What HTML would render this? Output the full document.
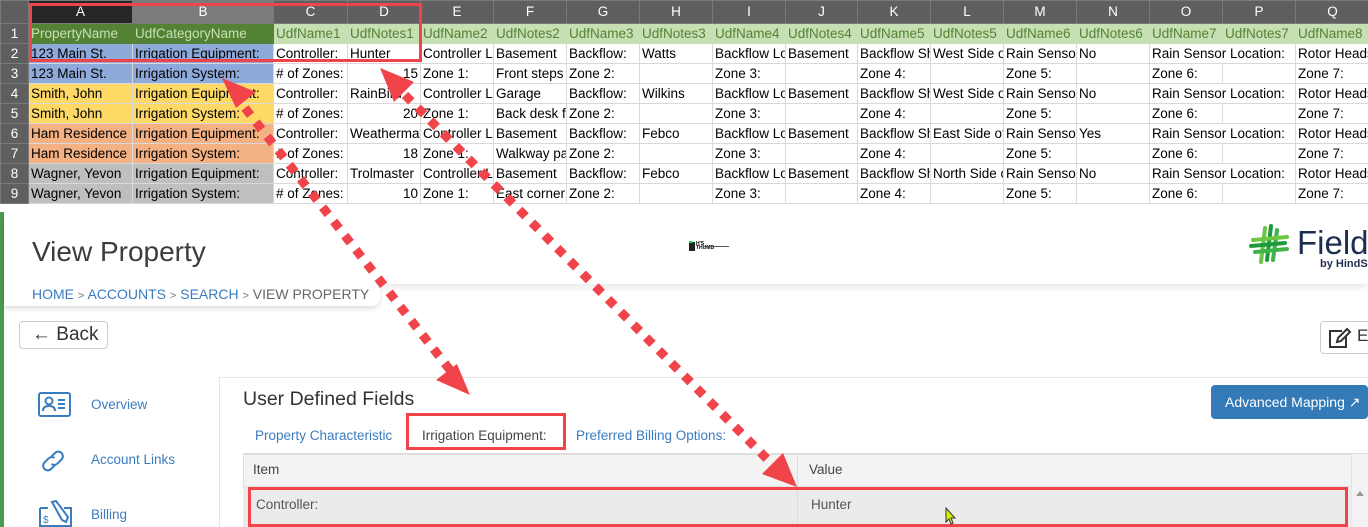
<!DOCTYPE html>
<html><head><meta charset="utf-8"><style>
*{margin:0;padding:0;box-sizing:border-box}
body{width:1368px;height:527px;overflow:hidden;background:#fff;font-family:"Liberation Sans",sans-serif;position:relative}
table.xl{position:absolute;left:0;top:0;border-collapse:collapse;table-layout:fixed;width:1368px;font-size:13.5px;color:#000}
table.xl td{height:20px;border:1px solid #d9d9d9;white-space:nowrap;overflow:hidden;padding:0 2px;line-height:18px}
table.xl tr.ch td{height:23px;background:#5f5f5f;color:#fff;text-align:center;border-color:#7a7a7a;font-size:13.5px}
table.xl td.rn{background:#5f5f5f;color:#fff;text-align:center;border-color:#7a7a7a;padding:0}
tr.h1 td{background:#c6e0b4;color:#548235;border-color:#c6e0b4}
tr.h1 td.g{background:#548235;color:#c6e0b4;border-color:#548235}
.b{background:#8eaadb}.y{background:#ffd966}.o{background:#f4b183}.s{background:#bfbfbf}
.r{text-align:right}
.abs{position:absolute;white-space:nowrap}
.clip{position:absolute;overflow:hidden}
</style></head><body>
<table class="xl">
<colgroup><col style="width:28px"><col style="width:104px"><col style="width:141px"><col style="width:74px"><col style="width:73px"><col style="width:73px"><col style="width:73px"><col style="width:73px"><col style="width:73px"><col style="width:73px"><col style="width:72px"><col style="width:73px"><col style="width:73px"><col style="width:73px"><col style="width:73px"><col style="width:73px"><col style="width:73px"><col style="width:74px"></colgroup>
<tr class="ch"><td style="background:#5f5f5f"></td><td style="background:#262626">A</td><td style="background:#7b7b7b">B</td><td>C</td><td>D</td><td>E</td><td>F</td><td>G</td><td>H</td><td>I</td><td>J</td><td>K</td><td>L</td><td>M</td><td>N</td><td>O</td><td>P</td><td>Q</td></tr>
<tr class="h1"><td class="rn">1</td><td class="g">PropertyName</td><td class="g">UdfCategoryName</td><td>UdfName1</td><td>UdfNotes1</td><td>UdfName2</td><td>UdfNotes2</td><td>UdfName3</td><td>UdfNotes3</td><td>UdfName4</td><td>UdfNotes4</td><td>UdfName5</td><td>UdfNotes5</td><td>UdfName6</td><td>UdfNotes6</td><td>UdfName7</td><td>UdfNotes7</td><td>UdfName8</td></tr>
<tr><td class="rn">2</td><td class="b">123 Main St.</td><td class="b">Irrigation Equipment:</td><td>Controller:</td><td>Hunter</td><td>Controller Location:</td><td>Basement</td><td>Backflow:</td><td>Watts</td><td>Backflow Location:</td><td>Basement</td><td>Backflow Shutoff:</td><td>West Side of house</td><td>Rain Sensor:</td><td>No</td><td colspan="2">Rain Sensor Location:</td><td>Rotor Heads:</td></tr>
<tr><td class="rn">3</td><td class="b">123 Main St.</td><td class="b">Irrigation System:</td><td># of Zones:</td><td class="r">15</td><td>Zone 1:</td><td>Front steps</td><td>Zone 2:</td><td></td><td>Zone 3:</td><td></td><td>Zone 4:</td><td></td><td>Zone 5:</td><td></td><td>Zone 6:</td><td></td><td>Zone 7:</td></tr>
<tr><td class="rn">4</td><td class="y">Smith, John</td><td class="y">Irrigation Equipment:</td><td>Controller:</td><td>RainBird</td><td>Controller Location:</td><td>Garage</td><td>Backflow:</td><td>Wilkins</td><td>Backflow Location:</td><td>Basement</td><td>Backflow Shutoff:</td><td>West Side of house</td><td>Rain Sensor:</td><td>No</td><td colspan="2">Rain Sensor Location:</td><td>Rotor Heads:</td></tr>
<tr><td class="rn">5</td><td class="y">Smith, John</td><td class="y">Irrigation System:</td><td># of Zones:</td><td class="r">20</td><td>Zone 1:</td><td>Back desk face</td><td>Zone 2:</td><td></td><td>Zone 3:</td><td></td><td>Zone 4:</td><td></td><td>Zone 5:</td><td></td><td>Zone 6:</td><td></td><td>Zone 7:</td></tr>
<tr><td class="rn">6</td><td class="o">Ham Residence</td><td class="o">Irrigation Equipment:</td><td>Controller:</td><td>Weathermatic</td><td>Controller Location:</td><td>Basement</td><td>Backflow:</td><td>Febco</td><td>Backflow Location:</td><td>Basement</td><td>Backflow Shutoff:</td><td>East Side of house</td><td>Rain Sensor:</td><td>Yes</td><td colspan="2">Rain Sensor Location:</td><td>Rotor Heads:</td></tr>
<tr><td class="rn">7</td><td class="o">Ham Residence</td><td class="o">Irrigation System:</td><td># of Zones:</td><td class="r">18</td><td>Zone 1:</td><td>Walkway path</td><td>Zone 2:</td><td></td><td>Zone 3:</td><td></td><td>Zone 4:</td><td></td><td>Zone 5:</td><td></td><td>Zone 6:</td><td></td><td>Zone 7:</td></tr>
<tr><td class="rn">8</td><td class="s">Wagner, Yevon</td><td class="s">Irrigation Equipment:</td><td>Controller:</td><td>Trolmaster</td><td>Controller Location:</td><td>Basement</td><td>Backflow:</td><td>Febco</td><td>Backflow Location:</td><td>Basement</td><td>Backflow Shutoff:</td><td>North Side of house</td><td>Rain Sensor:</td><td>No</td><td colspan="2">Rain Sensor Location:</td><td>Rotor Heads:</td></tr>
<tr><td class="rn">9</td><td class="s">Wagner, Yevon</td><td class="s">Irrigation System:</td><td># of Zones:</td><td class="r">10</td><td>Zone 1:</td><td>East corner</td><td>Zone 2:</td><td></td><td>Zone 3:</td><td></td><td>Zone 4:</td><td></td><td>Zone 5:</td><td></td><td>Zone 6:</td><td></td><td>Zone 7:</td></tr>
</table>

<!-- web page -->
<div class="abs" style="left:0;top:212px;width:4px;height:315px;background:#4a9a4f"></div>
<div class="abs" style="left:380px;top:212px;width:988px;height:72px;box-shadow:0 4px 6px rgba(0,0,0,0.08)"></div>
<div class="abs" style="left:4px;top:212px;width:376px;height:94px;border-bottom-right-radius:8px;box-shadow:0 3px 5px rgba(0,0,0,0.12);background:#fff"></div>
<div class="abs" style="left:380px;top:212px;width:988px;height:72px;background:#fff"></div>
<div class="abs" style="left:32px;top:236px;font-size:28px;color:#3c3c3c">View Property</div>
<div class="abs" style="left:32px;top:286px;font-size:14px;color:#3a7cc0">HOME <span style="color:#777;font-size:11px">&gt;</span> ACCOUNTS <span style="color:#777;font-size:11px">&gt;</span> SEARCH <span style="color:#777;font-size:11px">&gt;</span> <span style="color:#666">VIEW PROPERTY</span></div>
<div class="abs" style="left:689px;top:242px;width:6px;height:9px;background:#222"></div>
<div class="abs" style="left:689px;top:241px;width:4px;height:2px;background:#2c6"></div>
<div class="abs" style="left:696px;top:242px;font-size:5px;font-weight:bold;line-height:4px">H'S<br>THUMB</div>
<div class="abs" style="left:704px;top:246px;width:25px;height:1px;background:#555"></div>
<svg class="abs" style="left:1249px;top:224px" width="42" height="42" viewBox="0 0 42 42">
<g stroke-width="4" stroke-linecap="round"><line x1="16" y1="4" x2="12" y2="38" stroke="#6cc644"/><line x1="22" y1="2" x2="18" y2="36" stroke="#1f9a3a"/><line x1="28" y1="6" x2="24" y2="36" stroke="#3fb34a"/><line x1="4" y1="16" x2="38" y2="13" stroke="#6cc644"/><line x1="2" y1="22" x2="36" y2="19" stroke="#1f9a3a"/><line x1="6" y1="28" x2="38" y2="25" stroke="#3fb34a"/></g></svg>
<div class="clip" style="left:1297px;top:222px;width:71px;height:50px">
<div class="abs" style="left:0;top:2px;font-size:33px;color:#1d2f4e">FieldCore</div>
<div class="abs" style="left:23px;top:36px;font-size:11px;font-weight:bold;color:#1d2f4e">by HindSight</div>
</div>

<div class="abs" style="left:19px;top:321px;width:89px;height:28px;border:1px solid #ccc;border-radius:4px;font-size:19px;color:#333;padding:2px 0 0 12px">&#8592; Back</div>
<div class="clip" style="left:1320px;top:321px;width:48px;height:34px">
<div class="abs" style="left:0;top:0;width:60px;height:33px;border:1px solid #ccc;border-radius:4px"></div>
<svg class="abs" style="left:8px;top:6px" width="24" height="22" viewBox="0 0 24 22" fill="none" stroke="#333" stroke-width="2"><path d="M14 4H2v16h16V9"/><path d="M19 2l3 3-9 9-4 1 1-4z"/></svg>
<div class="abs" style="left:37px;top:5px;font-size:17px;color:#333">Edit</div>
</div>

<!-- sidebar -->
<svg class="abs" style="left:38px;top:392px" width="34" height="26" viewBox="0 0 34 26" fill="none" stroke="#3a7cc0" stroke-width="2"><rect x="1" y="1" width="31" height="23" rx="2"/><circle cx="11" cy="9" r="3.5"/><path d="M5 19c0-4 3-5 6-5s6 1 6 5M20 8h7M20 12h7M20 16h7"/></svg>
<div class="abs" style="left:91px;top:397px;font-size:13.5px;color:#3a7cc0">Overview</div>
<svg class="abs" style="left:38px;top:446px" width="30" height="30" viewBox="0 0 30 30" fill="none" stroke="#3a7cc0" stroke-width="2"><path d="M13 11l4-4a4.5 4.5 0 0 1 6.5 6.5l-4 4a4.5 4.5 0 0 1-6 .5"/><path d="M17 19l-4 4a4.5 4.5 0 0 1-6.5-6.5l4-4a4.5 4.5 0 0 1 6-.5"/></svg>
<div class="abs" style="left:91px;top:452px;font-size:13.5px;color:#3a7cc0">Account Links</div>
<svg class="abs" style="left:38px;top:500px" width="36" height="27" viewBox="0 0 36 27" fill="none" stroke="#3a7cc0" stroke-width="2"><path d="M2 8h8M26 8h7v18H2V8"/><path d="M14 2l4-1 12 16-2 5-4-2z"/><text x="5" y="23" font-size="10" fill="#3a7cc0" stroke="none" font-family="Liberation Sans">$</text></svg>
<div class="abs" style="left:91px;top:507px;font-size:13.5px;color:#3a7cc0">Billing</div>

<!-- content -->
<div class="abs" style="left:219px;top:377px;width:1149px;height:150px;border-top:1px solid #e6e6e6;border-left:1px solid #e6e6e6"></div>
<div class="abs" style="left:243px;top:388px;font-size:19.5px;color:#333">User Defined Fields</div>
<div class="abs" style="left:1211px;top:385px;width:157px;height:34px;background:#337ab7;border-radius:4px;color:#fff;font-size:14px;padding:9px 0 0 14px">Advanced Mapping &#8599;</div>
<div class="abs" style="left:255px;top:428px;font-size:13.5px;color:#3a7cc0">Property Characteristic</div>
<div class="abs" style="left:422px;top:428px;font-size:13.5px;color:#444">Irrigation Equipment:</div>
<div class="abs" style="left:576px;top:428px;font-size:13.5px;color:#3a7cc0">Preferred Billing Options:</div>
<div class="abs" style="left:243px;top:453px;width:1125px;height:1px;background:#ddd"></div>
<div class="abs" style="left:243px;top:454px;width:1109px;height:33px;background:#f3f3f3;border:1px solid #e0e0e0"></div>
<div class="abs" style="left:797px;top:454px;width:1px;height:73px;background:#ddd"></div>
<div class="abs" style="left:253px;top:462px;font-size:13.5px;color:#444">Item</div>
<div class="abs" style="left:809px;top:462px;font-size:13.5px;color:#444">Value</div>
<div class="abs" style="left:243px;top:487px;width:1109px;height:40px;background:#ebebeb"></div>
<div class="abs" style="left:1352px;top:454px;width:16px;height:73px;background:#f3f3f3"></div>
<div class="abs" style="left:797px;top:487px;width:1px;height:40px;background:#ddd"></div>
<div class="abs" style="left:256px;top:497px;font-size:13.5px;color:#555">Controller:</div>
<div class="abs" style="left:811px;top:497px;font-size:13.5px;color:#555">Hunter</div>
<div class="abs" style="left:1356px;top:491px;width:0;height:0;border-left:4px solid transparent;border-right:4px solid transparent;border-bottom:5px solid #999"></div>

<!-- red boxes -->
<div class="abs" style="left:29px;top:3px;width:393px;height:59px;border:3px solid #f0434a"></div>
<div class="abs" style="left:406px;top:413px;width:160px;height:37px;border:3px solid #f0434a"></div>
<div class="abs" style="left:248px;top:487px;width:1100px;height:40px;border:3px solid #f0434a;border-bottom-width:3px"></div>

<!-- arrows -->
<svg class="abs" style="left:0;top:0" width="1368" height="527">
<g fill="#f0434a">
<line x1="245" y1="108" x2="450" y2="370" stroke="#f0434a" stroke-width="9" stroke-dasharray="9 9"/>
<polygon points="222,78 256,92 236,108"/>
<polygon points="470,395 436,380 457,364"/>
<line x1="405" y1="95" x2="770" y2="462" stroke="#f0434a" stroke-width="9" stroke-dasharray="9 9"/>
<polygon points="380,68 414,82 394,102"/>
<polygon points="797,487 762,474 783,453"/>
</g>
<path d="M946 508v14l3-3 2 5 2-1-2-5h4z" fill="#d4f000" stroke="#333" stroke-width="1"/>
</svg>
</body></html>
